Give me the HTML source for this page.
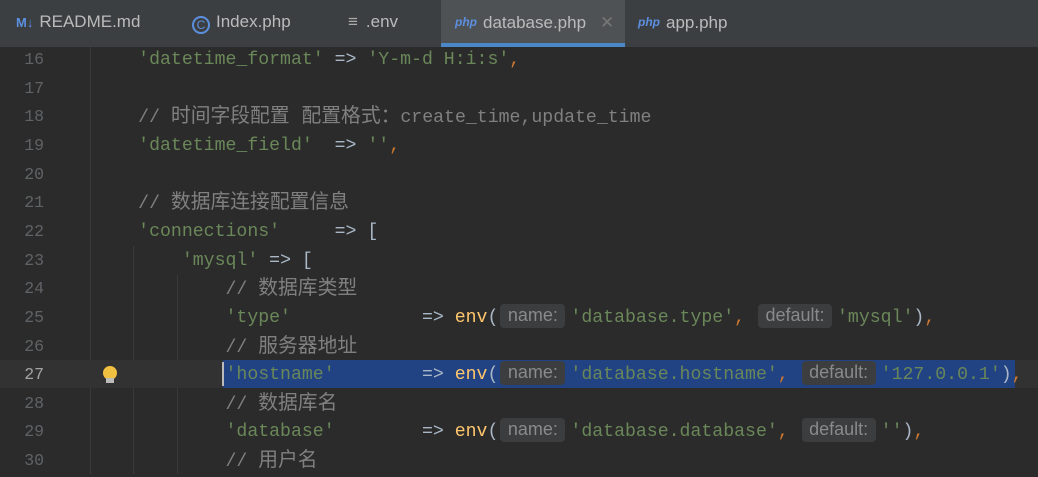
<!DOCTYPE html>
<html><head><meta charset="utf-8"><style>
*{margin:0;padding:0;box-sizing:border-box}
body{width:1038px;height:474px;overflow:hidden;background:#2b2b2b;position:relative;font-family:"Liberation Mono",monospace}
.tabs{position:absolute;left:0;top:0;width:1038px;height:47px;background:#3c3f41;font-family:"Liberation Sans",sans-serif;font-size:17px;color:#bbbbbb}
.tab{position:absolute;top:0;height:47px;line-height:44px;white-space:nowrap}
.act{background:#4e5254;border-bottom:4px solid #4a88c7;left:441px;width:184px}
.php{color:#5c8fe0;font-style:italic;font-weight:bold;font-size:12px;margin-right:6px;vertical-align:2px}
.row{position:absolute;left:0;width:1038px;height:28.65px;line-height:28.65px;font-size:18.2px;white-space:pre;color:#a9b7c6}
.ln{position:absolute;left:0;width:44px;text-align:right;color:#606366;font-size:16.5px}
.code{position:absolute;left:94.5px}
.s{color:#6a8759}.c{color:#808080}.k{color:#cc7832}.f{color:#ffc66d}
.cj{font-family:"Liberation Mono","Noto Sans CJK SC",monospace;font-size:19.8px}
.h{display:inline-block;background:#3b3d3e;color:#8a8a8a;font-family:"Liberation Sans",sans-serif;font-size:18px;line-height:23px;height:24px;padding:0 7.5px;border-radius:4px;margin:0 5px 0 2px;vertical-align:1px}
.g{position:absolute;width:1px;background:#393939}
</style></head><body>
<div class="tabs">
<div class="tab" style="left:16px"><span style="color:#5c8fe0;font-weight:bold;font-size:13px;margin-right:6px">M↓</span>README.md</div>
<div class="tab" style="left:192px"><span style="display:inline-block;width:18px;height:18px;border:2px solid #5c8fe0;border-radius:50%;color:#5c8fe0;font-size:12px;line-height:14px;text-align:center;vertical-align:-2px;margin-right:6px">C</span>Index.php</div>
<div class="tab" style="left:348px"><span style="color:#aaa;margin-right:8px">≡</span>.env</div>
<div class="tab act"><span style="margin-left:14px" class="php">php</span>database.php<span style="color:#777;margin-left:14px">✕</span></div>
<div class="tab" style="left:638px"><span class="php">php</span>app.php</div>
</div>
<div style="position:absolute;left:90px;top:47px;width:1px;height:427px;background:#3a3a3a"></div>
<div class="g" style="left:133px;top:246px;height:228px"></div>
<div class="g" style="left:177px;top:275px;height:199px"></div>
<div style="position:absolute;left:0;top:360px;width:1038px;height:28px;background:#323232"></div>
<div style="position:absolute;left:223px;top:360px;width:792px;height:28px;background:#214283"></div>
<div style="position:absolute;left:222px;top:362px;width:2px;height:24px;background:#bbb"></div>
<div style="position:absolute;left:103px;top:366px;width:14px;height:14px;border-radius:50%;background:#f0c040"></div>
<div style="position:absolute;left:106px;top:378px;width:8px;height:5px;background:#bbb"></div>

<div class="row" style="top:46px"><span class="ln">16</span><span class="code">    <span class="s">'datetime_format'</span> => <span class="s">'Y-m-d H:i:s'</span><span class="k">,</span></span></div>
<div class="row" style="top:74.6px"><span class="ln">17</span></div>
<div class="row" style="top:103.3px"><span class="ln">18</span><span class="code">    <span class="c">// <span class="cj">时间字段配置 配置格式：</span>create_time,update_time</span></span></div>
<div class="row" style="top:132px"><span class="ln">19</span><span class="code">    <span class="s">'datetime_field'</span>  => <span class="s">''</span><span class="k">,</span></span></div>
<div class="row" style="top:160.6px"><span class="ln">20</span></div>
<div class="row" style="top:189.2px"><span class="ln">21</span><span class="code">    <span class="c">// <span class="cj">数据库连接配置信息</span></span></span></div>
<div class="row" style="top:217.9px"><span class="ln">22</span><span class="code">    <span class="s">'connections'</span>     => [</span></div>
<div class="row" style="top:246.5px"><span class="ln">23</span><span class="code">        <span class="s">'mysql'</span> => [</span></div>
<div class="row" style="top:275.2px"><span class="ln">24</span><span class="code">            <span class="c">// <span class="cj">数据库类型</span></span></span></div>
<div class="row" style="top:303.8px"><span class="ln">25</span><span class="code">            <span class="s">'type'</span>            => <span class="f">env</span>(<span class="h">name:</span><span class="s">'database.type'</span><span class="k">,</span> <span class="h">default:</span><span class="s">'mysql'</span>)<span class="k">,</span></span></div>
<div class="row" style="top:332.5px"><span class="ln">26</span><span class="code">            <span class="c">// <span class="cj">服务器地址</span></span></span></div>
<div class="row" style="top:361px"><span class="ln" style="color:#a4a3a3">27</span><span class="code">            <span class="s">'hostname'</span>        => <span class="f">env</span>(<span class="h">name:</span><span class="s">'database.hostname'</span><span class="k">,</span> <span class="h">default:</span><span class="s">'127.0.0.1'</span>)<span class="k">,</span></span></div>
<div class="row" style="top:389.8px"><span class="ln">28</span><span class="code">            <span class="c">// <span class="cj">数据库名</span></span></span></div>
<div class="row" style="top:418.4px"><span class="ln">29</span><span class="code">            <span class="s">'database'</span>        => <span class="f">env</span>(<span class="h">name:</span><span class="s">'database.database'</span><span class="k">,</span> <span class="h">default:</span><span class="s">''</span>)<span class="k">,</span></span></div>
<div class="row" style="top:447px"><span class="ln">30</span><span class="code">            <span class="c">// <span class="cj">用户名</span></span></span></div>
</body></html>
